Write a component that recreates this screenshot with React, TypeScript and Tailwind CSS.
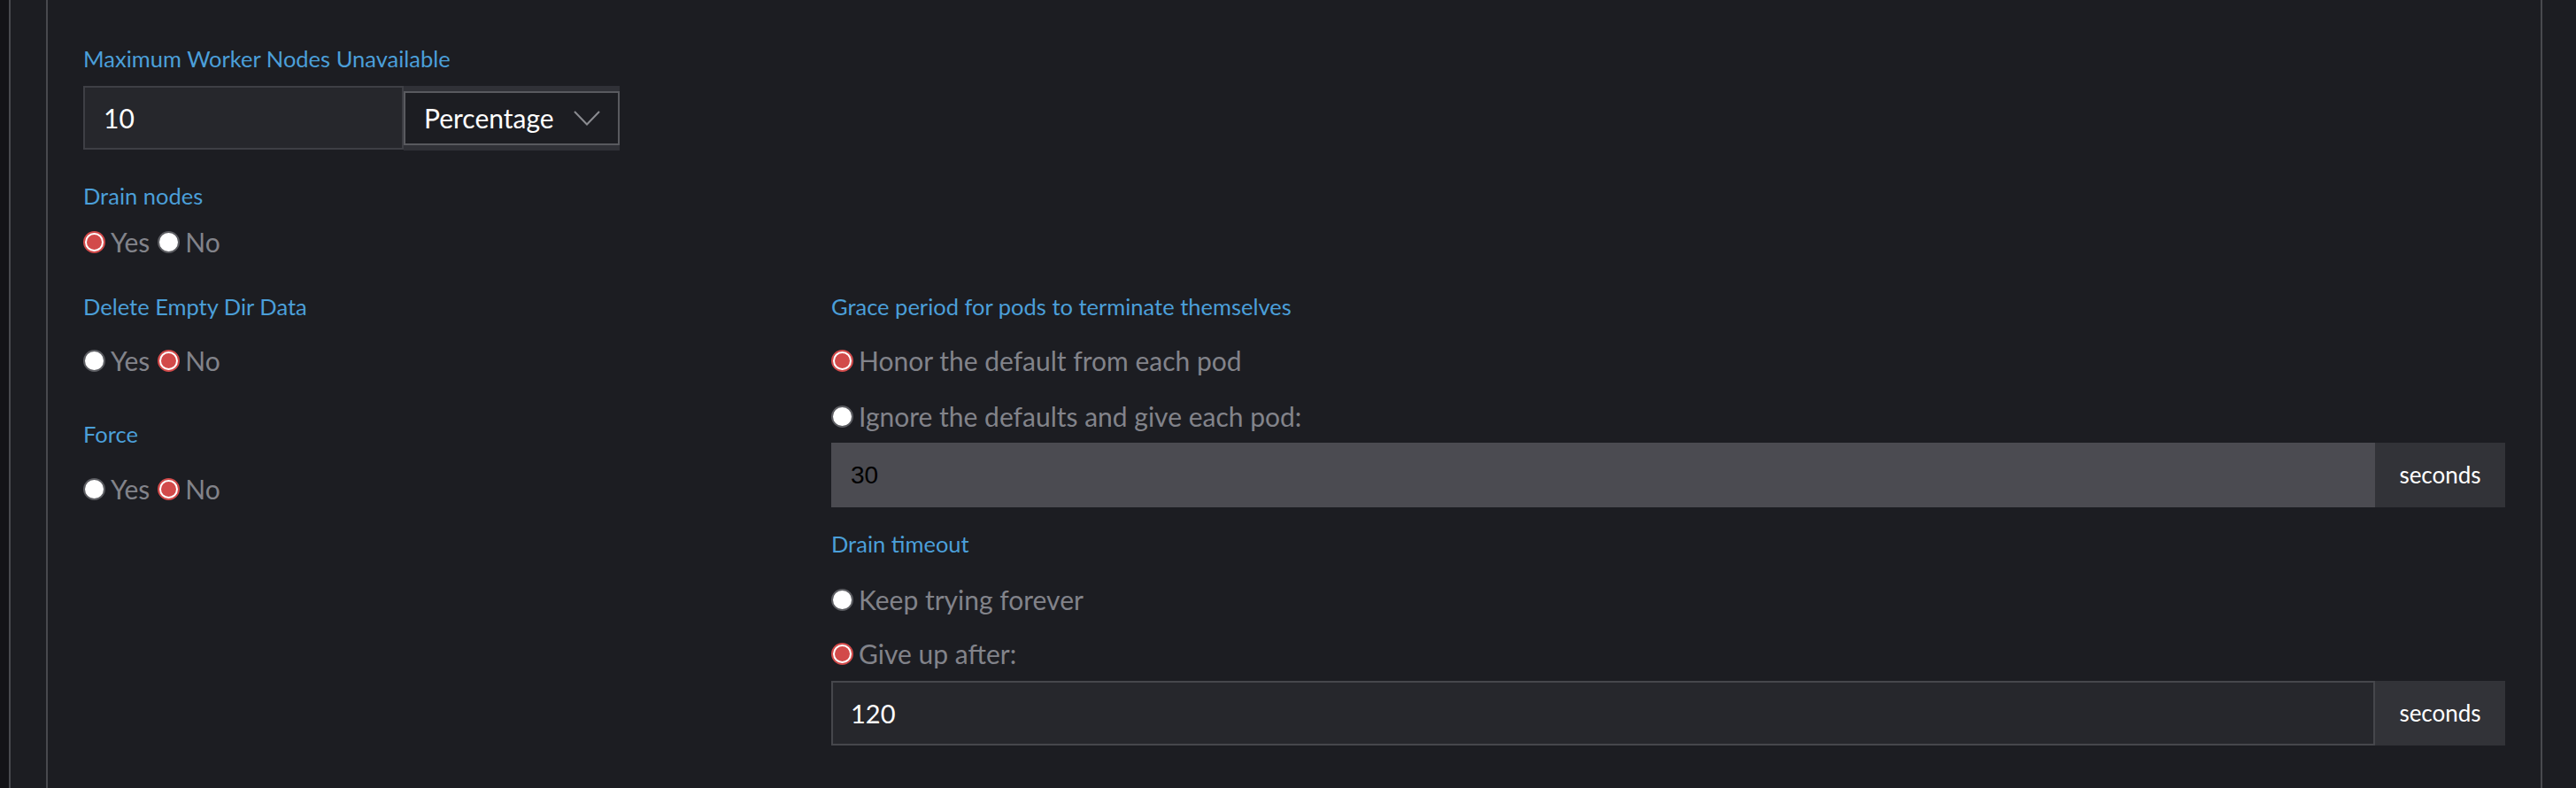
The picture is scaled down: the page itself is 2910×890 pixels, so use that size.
import React, { useState } from 'react';

const font = { fontFamily: 'Lato, "Open Sans", sans-serif' };

interface RadioProps {
  checked: boolean;
  label: string;
  onSelect: () => void;
}

const Radio: React.FC<RadioProps> = ({ checked, label, onSelect }) => (
  <label className="flex items-center h-[32px] cursor-pointer" onClick={onSelect}>
    {checked ? (
      <span className="w-[25px] h-[25px] rounded-full border-[2px] border-[#d24a4a] bg-white flex items-center justify-center">
        <span className="w-[17px] h-[17px] rounded-full bg-[#d24a4a]"></span>
      </span>
    ) : (
      <span className="w-[25px] h-[25px] rounded-full border-[2px] border-[#5c5d62] bg-white"></span>
    )}
    <span className="ml-[6px] text-[30px] leading-[32px] text-[#82838a]">{label}</span>
  </label>
);

const Label: React.FC<{ children: React.ReactNode }> = ({ children }) => (
  <div className="text-[25.5px] leading-[32px] text-[#4b9fd9]">{children}</div>
);

const Chevron = () => (
  <svg width="30" height="17" viewBox="0 0 30 17" fill="none">
    <polyline points="1,1 15,15.5 29,1" stroke="#8a8b90" strokeWidth="2" />
  </svg>
);

export default function App() {
  const [drain, setDrain] = useState(true);
  const [emptyDir, setEmptyDir] = useState(false);
  const [force, setForce] = useState(false);
  const [grace, setGrace] = useState('default');
  const [timeout, setTimeoutMode] = useState('giveup');

  return (
    <div className="h-[890px] w-[2910px] flex bg-[#1c1d22] overflow-hidden" style={font}>
      {/* outer dark strip */}
      <div className="w-[10px] bg-[#131317]"></div>
      <div className="flex-1 flex border-l-2 border-[#48494e] pl-[40px]">
        <div className="w-[2820px] border-l-2 border-r-2 border-[#48494e] px-[40px] pt-[50px]">
          {/* Max unavailable */}
          <Label>Maximum Worker Nodes Unavailable</Label>
          <div className="flex mt-[15px]">
            <div className="w-[362px] h-[72px] border-2 border-[#3e3f45] bg-[#26272c] flex items-center pl-[21px] text-[30px] text-white">
              10
            </div>
            <div className="w-[244px] h-[73px] bg-[#303137] py-[6px]">
              <div className="h-[61px] border-2 border-[#595a5f] bg-[#1c1d22] flex items-center pl-[21px] pr-[20px] justify-between">
                <span className="text-[30px] text-white">Percentage</span>
                <Chevron />
              </div>
            </div>
          </div>

          {/* Drain nodes */}
          <div className="mt-[35px]">
            <Label>Drain nodes</Label>
            <div className="flex gap-[9px] mt-[20px]">
              <Radio checked={drain} label="Yes" onSelect={() => setDrain(true)} />
              <Radio checked={!drain} label="No" onSelect={() => setDrain(false)} />
            </div>
          </div>

          <div className="flex mt-[41px]">
            {/* left column */}
            <div className="w-[845px] shrink-0">
              <Label>Delete Empty Dir Data</Label>
              <div className="flex gap-[9px] mt-[29px]">
                <Radio checked={emptyDir} label="Yes" onSelect={() => setEmptyDir(true)} />
                <Radio checked={!emptyDir} label="No" onSelect={() => setEmptyDir(false)} />
              </div>
              <div className="mt-[51px]">
                <Label>Force</Label>
                <div className="flex gap-[9px] mt-[30px]">
                  <Radio checked={force} label="Yes" onSelect={() => setForce(true)} />
                  <Radio checked={!force} label="No" onSelect={() => setForce(false)} />
                </div>
              </div>
            </div>

            {/* right column */}
            <div className="flex-1">
              <Label>Grace period for pods to terminate themselves</Label>
              <div className="mt-[29px]">
                <Radio checked={grace === 'default'} label="Honor the default from each pod" onSelect={() => setGrace('default')} />
              </div>
              <div className="mt-[31px]">
                <Radio checked={grace === 'custom'} label="Ignore the defaults and give each pod:" onSelect={() => setGrace('custom')} />
              </div>
              <div className="flex mt-[14px] h-[73px]">
                <div
                  className="flex-1 bg-[#4b4b51] flex items-center pl-[22px] text-[28px] text-black"
                  style={{ fontFamily: '"Liberation Sans", Arial, sans-serif' }}
                >
                  30
                </div>
                <div className="w-[147px] bg-[#323338] flex items-center justify-center text-[26px] text-white">
                  seconds
                </div>
              </div>

              <div className="mt-[25px]">
                <Label>Drain timeout</Label>
              </div>
              <div className="mt-[31px]">
                <Radio checked={timeout === 'forever'} label="Keep trying forever" onSelect={() => setTimeoutMode('forever')} />
              </div>
              <div className="mt-[29px]">
                <Radio checked={timeout === 'giveup'} label="Give up after:" onSelect={() => setTimeoutMode('giveup')} />
              </div>
              <div className="flex mt-[15px] h-[73px]">
                <div className="flex-1 border-2 border-[#46474c] bg-[#26272c] flex items-center pl-[20px] text-[29px] text-white">
                  120
                </div>
                <div className="w-[147px] bg-[#323338] flex items-center justify-center text-[26px] text-white">
                  seconds
                </div>
              </div>
            </div>
          </div>
        </div>
      </div>
    </div>
  );
}
